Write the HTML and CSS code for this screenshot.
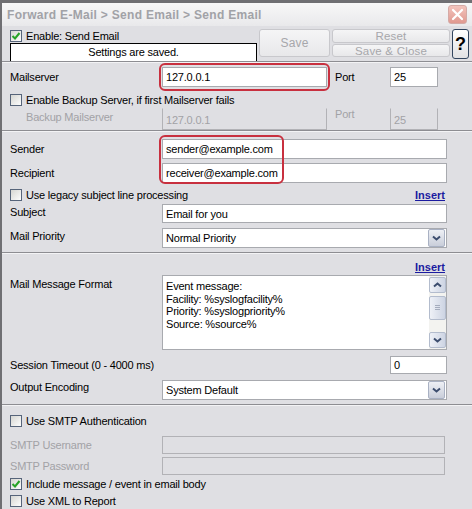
FILE: index.html
```html
<!DOCTYPE html>
<html>
<head>
<meta charset="utf-8">
<link rel="stylesheet" href="styles.css">
</head>
<body>
<div class="window">
  <div class="titlebar">
    <span class="title">Forward E-Mail &gt; Send Email &gt; Send Email</span>
    <span class="close"><svg width="17" height="17" viewBox="0 0 17 17"><path d="M4 4 L13 13 M13 4 L4 13" stroke="#fff" stroke-width="2.2" stroke-linecap="round"/></svg></span>
  </div>
  <div class="header">
    <div class="hleft">
      <div class="check-row"><span class="cb checked"><svg width="10" height="10" viewBox="0 0 10 10"><path d="M1.5 5 L4 7.5 L8.5 2" fill="none" stroke="#27a327" stroke-width="2"/></svg></span><span>Enable: Send Email</span></div>
      <div class="status">Settings are saved.</div>
    </div>
    <div class="btn save">Save</div>
    <div class="stack">
      <div class="btn small">Reset</div>
      <div class="btn small">Save &amp; Close</div>
    </div>
    <div class="help">?</div>
  </div>

  <div class="section s1">
    <div class="row h20">
      <span class="label">Mailserver</span>
      <span class="field mailserver">127.0.0.1</span>
      <span class="portlabel">Port</span>
      <span class="field port">25</span>
    </div>
    <div class="check-row cr1"><span class="cb"></span><span>Enable Backup Server, if first Mailserver fails</span></div>
    <div class="row backup">
      <span class="label dis indent">Backup Mailserver</span>
      <span class="field disfield mailserver">127.0.0.1</span>
      <span class="portlabel dis">Port</span>
      <span class="field disfield port">25</span>
    </div>
  </div>

  <div class="section s2">
    <div class="row h20">
      <span class="label">Sender</span>
      <span class="field wide">sender@example.com</span>
    </div>
    <div class="row h20 g4">
      <span class="label">Recipient</span>
      <span class="field wide">receiver@example.com</span>
    </div>
    <div class="check-row cr2">
      <span class="cb"></span><span class="grow">Use legacy subject line processing</span>
      <a class="insert">Insert</a>
    </div>
    <div class="row top h19 g2">
      <span class="label">Subject</span>
      <span class="field wide">Email for you</span>
    </div>
    <div class="row top h20 g5">
      <span class="label">Mail Priority</span>
      <span class="field wide select"><span class="grow">Normal Priority</span><span class="dd"><svg width="15" height="16" viewBox="0 0 15 16"><path d="M4 6.5 L7.5 9.5 L11 6.5" fill="none" stroke="#3c4d6e" stroke-width="2"/></svg></span></span>
    </div>
  </div>

  <div class="section s3">
    <div class="insertrow"><a class="insert">Insert</a></div>
    <div class="row top ta-row">
      <span class="label lpad">Mail Message Format</span>
      <div class="textarea">
        <div class="tatext">Event message:<br>Facility: %syslogfacility%<br>Priority: %syslogpriority%<br>Source: %source%</div>
        <div class="sb">
          <span class="sbtn"><svg width="15" height="14" viewBox="0 0 15 14"><path d="M4 8.5 L7.5 5.5 L11 8.5" fill="none" stroke="#3c4d6e" stroke-width="2"/></svg></span>
          <span class="thumb"><svg width="15" height="22" viewBox="0 0 15 22"><path d="M5 8.5 H10 M5 10.5 H10 M5 12.5 H10" stroke="#a4acbd" stroke-width="1"/></svg></span>
          <span class="sbspace"></span>
          <span class="sbtn"><svg width="15" height="14" viewBox="0 0 15 14"><path d="M4 5.5 L7.5 8.5 L11 5.5" fill="none" stroke="#3c4d6e" stroke-width="2"/></svg></span>
        </div>
      </div>
    </div>
    <div class="row h18 g6">
      <span class="grow">Session Timeout (0 - 4000 ms)</span>
      <span class="field timeout">0</span>
    </div>
    <div class="row top h20 g6">
      <span class="label lpad2">Output Encoding</span>
      <span class="field wide select"><span class="grow">System Default</span><span class="dd"><svg width="15" height="16" viewBox="0 0 15 16"><path d="M4 6.5 L7.5 9.5 L11 6.5" fill="none" stroke="#3c4d6e" stroke-width="2"/></svg></span></span>
    </div>
  </div>

  <div class="section s4">
    <div class="check-row cr4"><span class="cb"></span><span>Use SMTP Authentication</span></div>
    <div class="row h18 g8">
      <span class="label dis">SMTP Username</span>
      <span class="field disfield smtp"></span>
    </div>
    <div class="row h18 g3">
      <span class="label dis">SMTP Password</span>
      <span class="field disfield smtp"></span>
    </div>
    <div class="check-row g2"><span class="cb checked"><svg width="10" height="10" viewBox="0 0 10 10"><path d="M1.5 5 L4 7.5 L8.5 2" fill="none" stroke="#27a327" stroke-width="2"/></svg></span><span>Include message / event in email body</span></div>
    <div class="check-row g3"><span class="cb"></span><span>Use XML to Report</span></div>
  </div>

  <div class="mark mark1"></div>
  <div class="mark mark2"></div>
</div>
</body>
</html>
```

FILE: styles.css
```css
* { box-sizing: border-box; }
body {
  margin: 0;
  font-family: "Liberation Sans", Arial, sans-serif;
  font-size: 11px;
  letter-spacing: -0.2px;
  color: #000;
}
.window {
  position: relative;
  width: 472px;
  height: 509px;
  background: #dfdfe3;
  border-top: 3px solid #6f6f73;
  border-left: 2px solid #6f6f73;
  overflow: hidden;
}
.titlebar {
  height: 23px;
  background: linear-gradient(#f7f7f8, #e9e9eb);
  display: flex;
  align-items: center;
  justify-content: space-between;
  padding: 0 5px;
}
.title {
  font-weight: bold;
  font-size: 12px;
  letter-spacing: 0.3px;
  color: #a1a2a7;
}
.close {
  width: 19px;
  height: 19px;
  border: 1px solid #d4aaa6;
  border-radius: 3px;
  background: linear-gradient(#f3c4bd, #e09990);
  display: flex;
  align-items: center;
  justify-content: center;
}
.header {
  height: 35px;
  display: flex;
  gap: 2px;
  padding: 3px 0 0 8px;
}
.hleft {
  width: 247px;
  display: flex;
  flex-direction: column;
}
.check-row {
  height: 14px;
  display: flex;
  align-items: center;
  gap: 4px;
  flex-shrink: 0;
}
.header .check-row { height: 13px; }
.cb {
  width: 12px;
  height: 12px;
  border: 1px solid #56647a;
  background: linear-gradient(135deg, #d6d6d2, #fdfdfd);
  display: flex;
  align-items: center;
  justify-content: center;
  flex-shrink: 0;
}
.status {
  margin-top: 1px;
  height: 18px;
  border: 1px solid #000;
  border-bottom: 0;
  background: #fff;
  text-align: center;
  line-height: 17px;
}
.btn {
  border: 1px solid #c8c8cc;
  border-radius: 3px;
  background: linear-gradient(#f5f5f6, #e8e8ea);
  color: #a7a7ab;
  display: flex;
  align-items: center;
  justify-content: center;
  letter-spacing: 0.2px;
}
.save { width: 71px; height: 28px; font-size: 12px; }
.stack {
  width: 118px;
  display: flex;
  flex-direction: column;
  gap: 1px;
}
.btn.small { height: 14px; font-size: 11.5px; }
.btn.small + .btn.small { height: 13px; }
.help {
  width: 17px;
  height: 30px;
  border: 1px solid #33465f;
  border-radius: 3px;
  background: linear-gradient(#ffffff, #e2e2e4);
  font-weight: bold;
  font-size: 18px;
  display: flex;
  align-items: center;
  justify-content: center;
}
.section {
  border-top: 1px solid #8d8d92;
  box-shadow: inset 0 1px 0 #f3f3f5;
  padding: 0 25px 0 8px;
  display: flex;
  flex-direction: column;
  overflow: hidden;
}
.row { display: flex; align-items: center; flex-shrink: 0; }
.row.top { align-items: flex-start; }
.row.top .label { padding-top: 2px; }
.h18 { height: 18px; }
.h19 { height: 19px; }
.h20 { height: 20px; }
.g2 { margin-top: 2px; }
.g3 { margin-top: 3px; }
.g4 { margin-top: 4px; }
.g5 { margin-top: 5px; }
.g6 { margin-top: 6px; }
.g8 { margin-top: 8px; }
.grow { flex: 1; }
.label { width: 152px; flex-shrink: 0; }
.indent { padding-left: 16px; }
.dis { color: #a2a2a6; }
.field {
  height: 100%;
  background: #fff;
  border: 1px solid #a8aaaf;
  padding-left: 3px;
  display: flex;
  align-items: center;
}
.wide { flex: 1; }
.mailserver { width: 165px; }
.portlabel { width: 55px; margin-left: 8px; }
.port { width: 48px; }
.disfield {
  background: transparent;
  color: #a2a2a6;
  border-color: #b2b2b6;
}
.s1 { height: 69px; padding-top: 5px; }
.cr1 { margin-top: 6px; height: 13px; }
.backup { height: 22px; margin-top: 2px; align-items: flex-start; }
.backup .label { padding-top: 3px; }
.backup .field { border-top-color: transparent; align-items: flex-start; padding-top: 5px; }
.s2 { height: 122px; padding-top: 8px; }
.cr2 { margin-top: 5px; }
.insert {
  font-weight: bold;
  color: #1b1ba0;
  text-decoration: underline;
  letter-spacing: 0;
  margin-right: 2px;
}
.select { padding-right: 1px; }
.dd {
  width: 17px;
  height: 18px;
  border: 1px solid #a9b1c3;
  border-radius: 2px;
  background: linear-gradient(#eef0f5, #c9ceda);
  display: flex;
  align-items: center;
  justify-content: center;
}
.s3 { height: 152px; padding-top: 8px; }
.insertrow {
  height: 12px;
  display: flex;
  justify-content: flex-end;
  align-items: center;
  flex-shrink: 0;
}
.ta-row { margin-top: 2px; height: 75px; }
.lpad { padding-top: 3px !important; }
.lpad2 { padding-top: 1px !important; }
.textarea {
  flex: 1;
  height: 75px;
  background: #fff;
  border: 1px solid #a8aaaf;
  display: flex;
}
.tatext {
  flex: 1;
  padding: 4px 0 0 3px;
  line-height: 12.7px;
}
.sb {
  width: 17px;
  display: flex;
  flex-direction: column;
  background: #f3f3f0;
  padding: 1px 0;
}
.sbtn, .thumb {
  height: 16px;
  border: 1px solid #b3bccd;
  border-radius: 2px;
  background: linear-gradient(90deg, #eef1f7, #cdd4e3);
  display: flex;
  align-items: center;
  justify-content: center;
}
.thumb { height: 24px; margin-top: 3px; }
.sbspace { flex: 1; }
.timeout { width: 57px; }
.s4 { height: 105px; padding-top: 9px; }
.smtp { flex: 1; margin-right: 2px; }
.mark {
  position: absolute;
  border: 2px solid #c8303f;
  border-radius: 6px;
}
.mark1 { left: 157px; top: 60px; width: 171px; height: 28px; }
.mark2 { left: 157px; top: 132px; width: 125px; height: 49px; }
```
